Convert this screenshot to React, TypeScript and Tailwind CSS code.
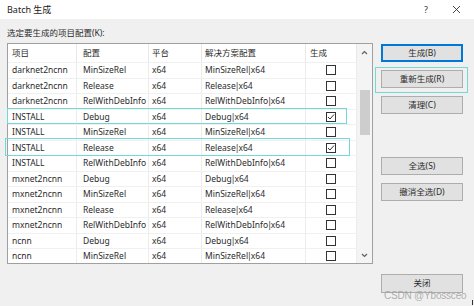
import React from 'react'

const rows: { project: string; config: string; checked?: boolean }[] = [
  { project: 'darknet2ncnn', config: 'MinSizeRel' },
  { project: 'darknet2ncnn', config: 'Release' },
  { project: 'darknet2ncnn', config: 'RelWithDebInfo' },
  { project: 'INSTALL', config: 'Debug', checked: true },
  { project: 'INSTALL', config: 'MinSizeRel' },
  { project: 'INSTALL', config: 'Release', checked: true },
  { project: 'INSTALL', config: 'RelWithDebInfo' },
  { project: 'mxnet2ncnn', config: 'Debug' },
  { project: 'mxnet2ncnn', config: 'MinSizeRel' },
  { project: 'mxnet2ncnn', config: 'Release' },
  { project: 'mxnet2ncnn', config: 'RelWithDebInfo' },
  { project: 'ncnn', config: 'Debug' },
  { project: 'ncnn', config: 'MinSizeRel' },
]

const gridCols = 'grid grid-cols-[69px_72px_53px_104px_51px]'

const Checkbox = ({ checked }: { checked?: boolean }) => (
  <div className="w-[10px] h-[10px] border border-[#333] bg-white flex items-center justify-center">
    {checked && (
      <svg width="8" height="8" viewBox="0 0 8 8">
        <polyline points="1,4 3,6 7,1.5" fill="none" stroke="#333" strokeWidth="1" />
      </svg>
    )}
  </div>
)

const Button = ({ label, primary }: { label: string; primary?: boolean }) => (
  <div
    className={`w-[82px] h-[18px] flex items-center justify-center bg-[#e1e1e1] ${
      primary ? 'border-2 border-[#0078d7]' : 'border border-[#adadad]'
    }`}
  >
    {label}
  </div>
)

export default function App() {
  return (
    <div
      className="relative w-[474px] h-[306px] overflow-hidden bg-[#f0f0f0] text-[8.5px] leading-none text-[#2b2b2b]"
      style={{ fontFamily: '"Noto Sans", "Noto Sans CJK SC", sans-serif' }}
    >
      {/* Title bar */}
      <div className="h-[19px] bg-white flex items-center pl-[7px]">
        <span className="text-[9px] text-[#222]">Batch 生成</span>
        <span className="ml-auto text-[9px] text-[#333] w-[10px] text-center mr-[21px]">?</span>
        <svg width="9" height="9" viewBox="0 0 9 9" className="mr-[13px]">
          <path d="M1 1 L8 8 M8 1 L1 8" stroke="#333" strokeWidth="0.9" />
        </svg>
      </div>

      <div className="flex">
        {/* Left: list */}
        <div className="pl-[7px]">
          <div className="h-[12px] mt-[8px] flex items-center">选定要生成的项目配置(K):</div>
          <div className="mt-[4px] w-[366px] h-[221px] border border-[#a0a0a0] bg-white flex overflow-hidden">
            <div className="w-[350px] flex flex-col">
              <div className={`${gridCols} h-[18px] shrink-0`}>
                <div className="flex items-center pl-[4px] border-r border-[#e8e8e8]">项目</div>
                <div className="flex items-center pl-[6px] border-r border-[#e8e8e8]">配置</div>
                <div className="flex items-center pl-[3px] border-r border-[#e8e8e8]">平台</div>
                <div className="flex items-center pl-[3px] border-r border-[#e8e8e8]">解决方案配置</div>
                <div className="flex items-center pl-[4px] border-r border-[#e8e8e8]">生成</div>
              </div>
              {rows.map((r, i) => (
                <div key={i} className={`${gridCols} h-[15.5px] shrink-0 border-t border-[#f0f0f0]`}>
                  <div className="flex items-center pl-[4px] border-r border-[#ececec]">{r.project}</div>
                  <div className="flex items-center pl-[6px] border-r border-[#ececec]">{r.config}</div>
                  <div className="flex items-center pl-[3px] border-r border-[#ececec]">x64</div>
                  <div className="flex items-center pl-[3px] border-r border-[#ececec]">
                    {r.config}
                    <span className="mx-[-1px]">|</span>
                    x64
                  </div>
                  <div className="flex items-center justify-center border-r border-[#ececec]">
                    <Checkbox checked={r.checked} />
                  </div>
                </div>
              ))}
            </div>
            {/* Scrollbar */}
            <div className="w-[15px] bg-[#f4f4f4] flex flex-col items-center ml-auto">
              <div className="h-[16px] flex items-center justify-center">
                <svg width="7" height="5" viewBox="0 0 7 5">
                  <polyline points="1,4 3.5,1.5 6,4" fill="none" stroke="#606060" strokeWidth="1.2" />
                </svg>
              </div>
              <div className="mt-[30px] w-[10px] h-[45px] bg-[#cdcdcd]" />
              <div className="mt-auto h-[16px] flex items-center justify-center">
                <svg width="7" height="5" viewBox="0 0 7 5">
                  <polyline points="1,1 3.5,3.5 6,1" fill="none" stroke="#606060" strokeWidth="1.2" />
                </svg>
              </div>
            </div>
          </div>
        </div>

        {/* Right: buttons */}
        <div className="pl-[8px] pt-[25px] flex flex-col">
          <Button label="生成(B)" primary />
          <div className="mt-[8px]">
            <Button label="重新生成(R)" />
          </div>
          <div className="mt-[8px]">
            <Button label="清理(C)" />
          </div>
          <div className="mt-[43px]">
            <Button label="全选(S)" />
          </div>
          <div className="mt-[8px]">
            <Button label="撤消全选(D)" />
          </div>
          <div className="mt-[73px] w-[82px] h-[19px] flex items-center justify-center bg-[#e1e1e1] border border-[#adadad]">
            关闭
          </div>
        </div>
      </div>

      {/* Annotation highlights */}
      <div className="absolute left-[7px] top-[108px] w-[340px] h-[16px] border-[1.5px] border-[#72d9d6] pointer-events-none" />
      <div className="absolute left-[5px] top-[138px] w-[345px] h-[18px] border-[1.5px] border-[#72d9d6] pointer-events-none" />
      <div className="absolute left-[375px] top-[67px] w-[93px] h-[26px] border-[1.5px] border-[#72d9d6] pointer-events-none" />

      {/* Watermark */}
      <div
        className="absolute left-[384px] top-[291px] text-[10px] leading-none text-[#9a9a9a]/80 tracking-[-0.2px]"
        style={{ fontFamily: '"Liberation Sans", Arial, sans-serif' }}
      >
        CSDN @Ybossceo
      </div>
      <div className="absolute left-[472px] top-[300px] w-[1px] h-[5px] bg-[#333]" />
    </div>
  )
}
